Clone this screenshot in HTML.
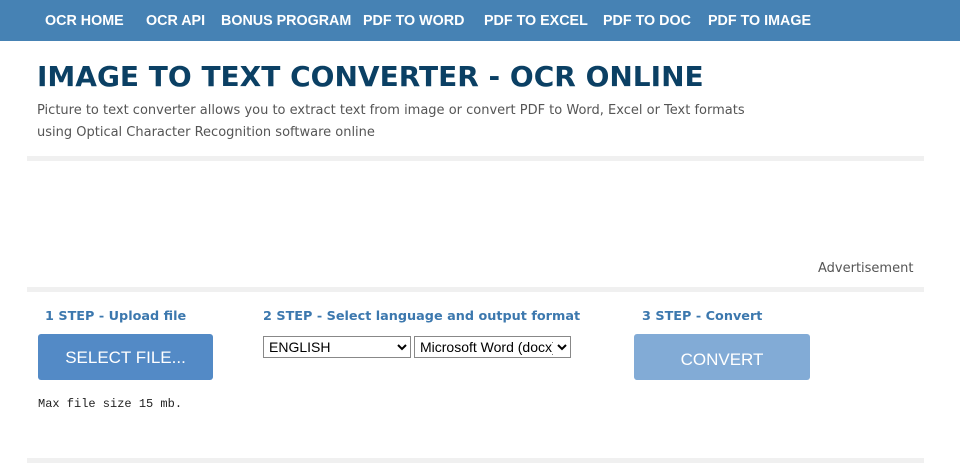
<!DOCTYPE html>
<html><head><meta charset="utf-8"><style>
*{margin:0;padding:0;box-sizing:border-box}
body{width:960px;height:476px;background:#fff;font-family:"Liberation Sans","DejaVu Sans",sans-serif;position:relative;overflow:hidden}
.nav{position:absolute;left:0;top:0;width:960px;height:41px;background:#4682b4}
.nav span{position:absolute;top:13px;color:#fff;font-weight:bold;font-size:14.3px;white-space:nowrap}
.a{position:absolute;white-space:nowrap}
.sep{position:absolute;left:27px;width:897px;height:5px;background:#f0f0f0}
h1{position:absolute;left:37px;top:60px;font-size:28px;color:#0b4064;font-weight:bold;white-space:nowrap;font-family:"DejaVu Sans",sans-serif}
.sub{left:37px;color:#555;font-family:"DejaVu Sans",sans-serif;font-size:13px}
.step{color:#3c78ae;font-weight:bold;top:309px;font-family:"DejaVu Sans",sans-serif;font-size:12.8px}
.btn{position:absolute;border-radius:3px;color:#fff;font-size:17px;text-align:center}
select{position:absolute;height:22px;font-size:14px;padding:0 1px;font-family:"Liberation Sans",sans-serif;border:1px solid #888;background:#fff}
</style></head><body>
<div class="nav">
<span style="left:45px">OCR HOME</span>
<span style="left:146px">OCR API</span>
<span style="left:221px">BONUS PROGRAM</span>
<span style="left:363px">PDF TO WORD</span>
<span style="left:484px">PDF TO EXCEL</span>
<span style="left:603px">PDF TO DOC</span>
<span style="left:708px">PDF TO IMAGE</span>
</div>
<h1>IMAGE TO TEXT CONVERTER - OCR ONLINE</h1>
<div class="a sub" style="top:103px">Picture to text converter allows you to extract text from image or convert PDF to Word, Excel or Text formats</div>
<div class="a sub" style="top:125px">using Optical Character Recognition software online</div>
<div class="sep" style="top:156px"></div>
<div class="a" style="left:818px;top:261px;color:#555;font-family:'DejaVu Sans',sans-serif;font-size:13px">Advertisement</div>
<div class="sep" style="top:287px"></div>
<div class="a step" style="left:45px">1 STEP - Upload file</div>
<div class="a step" style="left:263px">2 STEP - Select language and output format</div>
<div class="a step" style="left:642px">3 STEP - Convert</div>
<div class="btn" style="left:38px;top:334px;width:175px;height:46px;line-height:48px;background:#538ac6">SELECT FILE...</div>
<select style="left:263px;top:336px;width:148px"><option>ENGLISH</option></select>
<select style="left:414px;top:336px;width:157px"><option>Microsoft Word (docx)</option></select>
<div class="btn" style="left:634px;top:334px;width:176px;height:46px;line-height:52px;background:#82abd6">CONVERT</div>
<div class="a" style="left:38px;top:397px;font-family:'Liberation Mono',monospace;font-size:12px;color:#222">Max file size 15 mb.</div>
<div class="sep" style="top:458px"></div>
</body></html>
